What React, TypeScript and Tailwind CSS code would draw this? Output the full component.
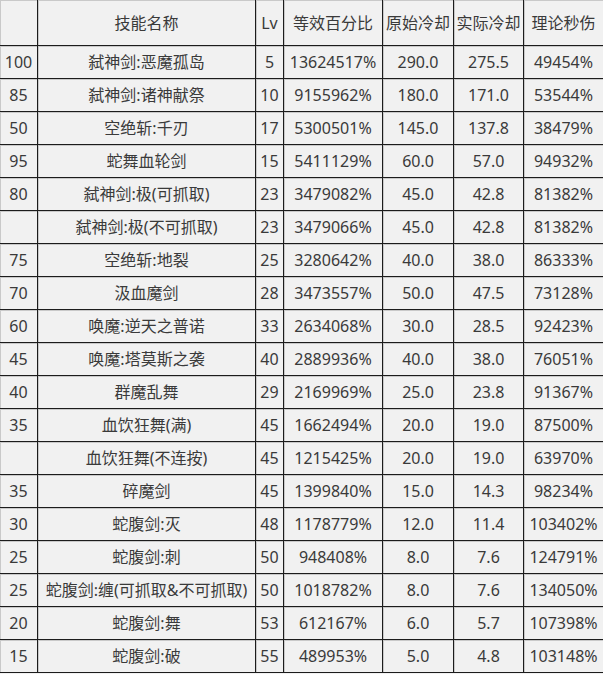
const rows: string[][] = [
  ['100', '弑神剑:恶魔孤岛', '5', '13624517%', '290.0', '275.5', '49454%'],
  ['85', '弑神剑:诸神献祭', '10', '9155962%', '180.0', '171.0', '53544%'],
  ['50', '空绝斩:千刃', '17', '5300501%', '145.0', '137.8', '38479%'],
  ['95', '蛇舞血轮剑', '15', '5411129%', '60.0', '57.0', '94932%'],
  ['80', '弑神剑:极(可抓取)', '23', '3479082%', '45.0', '42.8', '81382%'],
  ['', '弑神剑:极(不可抓取)', '23', '3479066%', '45.0', '42.8', '81382%'],
  ['75', '空绝斩:地裂', '25', '3280642%', '40.0', '38.0', '86333%'],
  ['70', '汲血魔剑', '28', '3473557%', '50.0', '47.5', '73128%'],
  ['60', '唤魔:逆天之普诺', '33', '2634068%', '30.0', '28.5', '92423%'],
  ['45', '唤魔:塔莫斯之袭', '40', '2889936%', '40.0', '38.0', '76051%'],
  ['40', '群魔乱舞', '29', '2169969%', '25.0', '23.8', '91367%'],
  ['35', '血饮狂舞(满)', '45', '1662494%', '20.0', '19.0', '87500%'],
  ['', '血饮狂舞(不连按)', '45', '1215425%', '20.0', '19.0', '63970%'],
  ['35', '碎魔剑', '45', '1399840%', '15.0', '14.3', '98234%'],
  ['30', '蛇腹剑:灭', '48', '1178779%', '12.0', '11.4', '103402%'],
  ['25', '蛇腹剑:刺', '50', '948408%', '8.0', '7.6', '124791%'],
  ['25', '蛇腹剑:缠(可抓取&不可抓取)', '50', '1018782%', '8.0', '7.6', '134050%'],
  ['20', '蛇腹剑:舞', '53', '612167%', '6.0', '5.7', '107398%'],
  ['15', '蛇腹剑:破', '55', '489953%', '5.0', '4.8', '103148%'],
];

const header = ['', '技能名称', 'Lv', '等效百分比', '原始冷却', '实际冷却', '理论秒伤'];

const Cell = ({ text, last }: { text: string; last: boolean }) => (
  <div
    className={`flex items-center justify-center whitespace-nowrap border-b border-[#1c1c1c] bg-[#f1f1f1] shadow-[inset_1px_1px_0_#c9c9c9] ${
      last ? '' : 'border-r'
    }`}
  >
    {text}
  </div>
);

export default function App() {
  return (
    <div
      className="w-[603px] h-[674px] overflow-hidden bg-[#f1f1f1] text-[16px] text-[#3a3a3a]"
      style={{ fontFamily: '"Noto Sans", "Noto Sans CJK SC", sans-serif' }}
    >
      <div className="grid grid-cols-[38px_218px_28px_99px_71px_70px_79px] grid-rows-[46px_repeat(19,33px)]">
        {header.map((h, i) => (
          <Cell key={`h${i}`} text={h} last={i === 6} />
        ))}
        {rows.map((r, ri) =>
          r.map((c, ci) => <Cell key={`${ri}-${ci}`} text={c} last={ci === 6} />)
        )}
      </div>
    </div>
  );
}
